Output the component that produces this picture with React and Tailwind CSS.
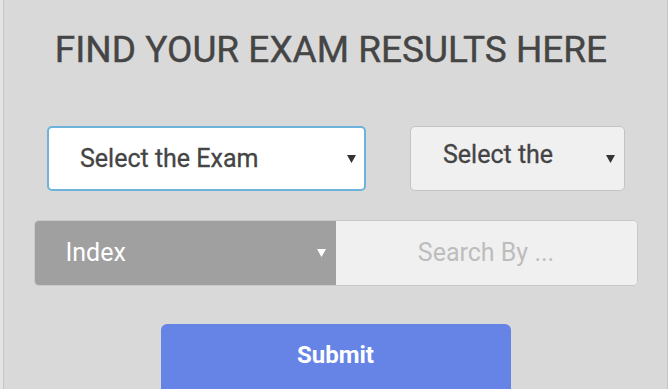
import React from "react";

function Arrow({ color = "#333" }) {
  return (
    <svg width="9" height="8" viewBox="0 0 9 8" className="shrink-0">
      <path d="M0 0 L9 0 L4.5 8 Z" fill={color} />
    </svg>
  );
}

export default function App() {
  return (
    <div
      className="flex h-[389px] w-[671px] overflow-hidden bg-white"
      style={{ fontFamily: "Roboto, 'Noto Sans', sans-serif" }}
    >
      <div className="w-[3px] shrink-0 bg-[#e4e4e4]" />
      <div className="flex w-[665px] shrink-0 flex-col items-center border-x border-[#c6c6c6] bg-[#d9d9d9]">
        <h1 className="mt-[29px] mr-[9px] shrink-0 text-[37px] leading-[42px] text-[#454545] [-webkit-text-stroke:0.4px_#454545]">
          FIND YOUR EXAM RESULTS HERE
        </h1>
        <div className="mt-[55px] flex w-full shrink-0">
          <div className="ml-[43px] flex h-[65px] w-[319px] items-center rounded-[5px] border-2 border-[#6db3dc] bg-white pl-[31px] pr-[8px]">
            <span className="flex-1 text-[25px] text-[#444] [-webkit-text-stroke:0.3px_#444]">Select the Exam</span>
            <Arrow />
          </div>
          <div className="ml-[44px] flex h-[65px] w-[215px] items-center rounded-[5px] border border-[#c4c4c4] bg-[#f0f0f0] pl-[32px] pr-[9px]">
            <span className="-mt-[8px] flex-1 text-[25px] text-[#444] [-webkit-text-stroke:0.3px_#444]">Select the</span>
            <Arrow />
          </div>
        </div>
        <div className="mt-[29px] flex h-[66px] w-[604px] shrink-0 overflow-hidden rounded-[5px] border border-[#c8c8c8]">
          <div className="flex w-[301px] items-center bg-[#a0a0a0] pl-[31px] pr-[10px]">
            <span className="flex-1 text-[25px] text-white">Index</span>
            <Arrow color="#fff" />
          </div>
          <div className="flex flex-1 items-center justify-center bg-[#f0f0f0]">
            <span className="text-[25px] text-[#bdbdbd]">Search By ...</span>
          </div>
        </div>
        <button className="mt-[38px] h-[70px] w-[350px] shrink-0 rounded-[6px] bg-[#6584e6] pb-[8px] text-[24px] font-bold text-white">
          Submit
        </button>
      </div>
    </div>
  );
}
